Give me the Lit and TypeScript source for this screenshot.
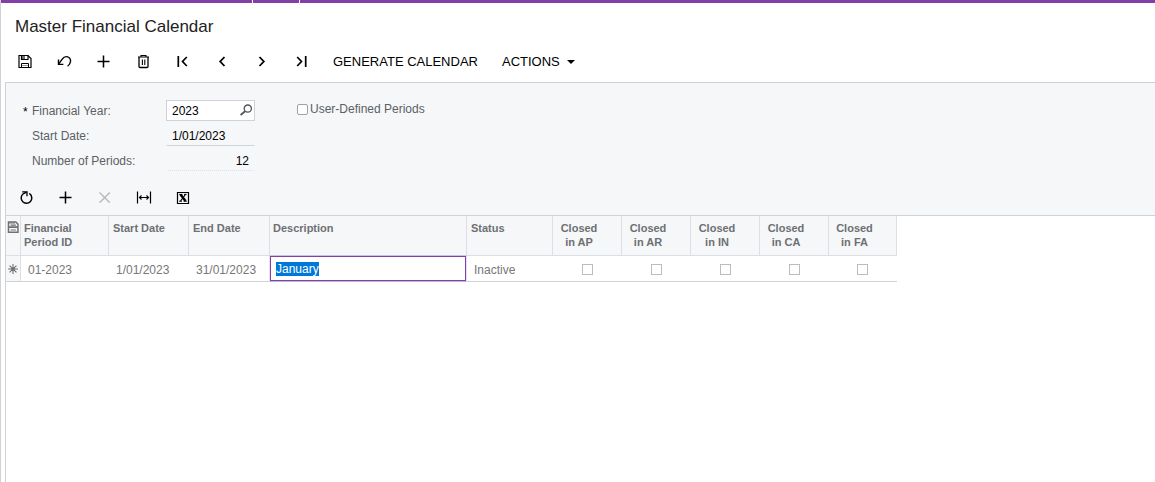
import { LitElement, html, css, svg, type TemplateResult } from "lit";
import { customElement, property, query } from "lit/decorators.js";

const line = (d: string, width = 1.5) =>
  svg`<path d=${d} fill="none" stroke="currentColor" stroke-width=${width} />`;

const icons: Record<string, TemplateResult> = {
  save: svg`${line("M3 2.5H12L15 5.5V14.5H3Z", 1.2)}${line("M5.5 2.5V6.5H12V2.5", 1.2)}<path d="M6 2.5h3v3.5h-3z" fill="currentColor" opacity=".55"/>${line("M5.5 14V10.5H12.5V14", 1)}<path d="M6 12h6v1h-6z" fill="currentColor" opacity=".4"/>`,
  undo: svg`${line("M3 10.6L6.2 6.2Q8 3.4 10.8 3.6Q14.6 4.4 14.6 8Q14.4 11.2 11.6 13.2", 1.4)}${line("M2.5 6.6V11.4H7.4", 1.4)}`,
  add: svg`${line("M8.5 2.5V14.5M2.5 8.5H14.5", 1.5)}`,
  trash: svg`${line("M3 4H14M6 4V2.5H11V4", 1.1)}${line("M4 4V13.5Q4 14.5 5 14.5H12Q13 14.5 13 13.5V4", 1.3)}${line("M7.4 6.5V12M9.8 6.5V12", 1.1)}`,
  first: svg`${line("M4.3 3V14M12.8 4L8.5 8.5L12.8 13", 1.7)}`,
  previous: svg`${line("M10.5 4L6.2 8.5L10.5 13", 1.8)}`,
  next: svg`${line("M6.5 4L10.8 8.5L6.5 13", 1.8)}`,
  last: svg`${line("M12.7 3V14M4.2 4L8.5 8.5L4.2 13", 1.7)}`,
  refresh: svg`${line("M8.6 3.6C5.6 4 3.2 6.2 3.2 9A5.2 5.2 0 0 0 8.5 14.2A5.2 5.2 0 0 0 13.8 9C13.8 7 13 5.5 11.3 4.4", 1.5)}${line("M4.2 2.8H9V7.2", 1.3)}`,
  remove: svg`${line("M3.5 3.5L13.8 13.8M13.8 3.5L3.5 13.8", 1.4)}`,
  fit: svg`${line("M2.5 2.5V14.5M15.5 2.5V14.5", 1.2)}${line("M4.5 8.5H13.5M6.5 6.5L4.5 8.5L6.5 10.5M11.5 6.5L13.5 8.5L11.5 10.5", 1.1)}`,
  excel: svg`${line("M3.5 3.5H14.5V14.5H3.5Z", 1.2)}${line("M6.5 5.5L11.5 12", 2.4)}${line("M11.5 5.5L6.5 12", 1.2)}${line("M5.2 5.4H8.4M10 5.4H12.6M5.2 12.2H8M9.6 12.2H12.8", 1)}`,
  search: svg`<circle cx="10.8" cy="6.6" r="3.6" fill="none" stroke="currentColor" stroke-width="1.3"/>${line("M8.1 9.3L3.6 13", 1.8)}`,
  notes: svg`${line("M3 2.5H12L14.5 5V15H3Z", 1.8)}<path d="M3 7.6h11.5v2.2H3zM3 3h8v1.4H3z" fill="currentColor"/>${line("M5.5 6.2H12M5.5 12.2H12", 1.3)}`,
  star: svg`${line("M8.5 2.5V14.5M2.5 8.5H14.5M4.3 4.3L12.7 12.7M12.7 4.3L4.3 12.7", 1.3)}<circle cx="8.5" cy="8.5" r="2" fill="currentColor"/>`,
};

@customElement("erp-icon")
class ErpIcon extends LitElement {
  static styles = css`
    :host { display: block; width: 17px; height: 17px; }
    svg { display: block; width: 100%; height: 100%; }
  `;
  @property() name = "";
  render() {
    return html`<svg viewBox="0 0 17 17" aria-hidden="true">${icons[this.name]}</svg>`;
  }
}

interface Tool { icon: string; label: string; disabled?: boolean; }

const pageTools: Tool[] = [
  { icon: "save", label: "Save" },
  { icon: "undo", label: "Cancel" },
  { icon: "add", label: "Add" },
  { icon: "trash", label: "Delete" },
  { icon: "first", label: "First" },
  { icon: "previous", label: "Previous" },
  { icon: "next", label: "Next" },
  { icon: "last", label: "Last" },
];

const gridTools: Tool[] = [
  { icon: "refresh", label: "Refresh" },
  { icon: "add", label: "Add row" },
  { icon: "remove", label: "Delete row", disabled: true },
  { icon: "fit", label: "Fit to screen" },
  { icon: "excel", label: "Export to Excel" },
];

const modules = ["AP", "AR", "IN", "CA", "FA"];

@customElement("app-root")
class AppRoot extends LitElement {
  static styles = css`
    :host {
      display: flex;
      flex-direction: column;
      min-height: 100vh;
      box-sizing: border-box;
      border-left: 1px solid #cfd2d6;
      background: #fff;
      color: #000;
      font: 12px/16px "Liberation Sans", Arial, sans-serif;
    }
    * { box-sizing: border-box; }
    button, input { font: inherit; color: inherit; margin: 0; }
    .strip { display: flex; gap: 1px; height: 3px; }
    .strip span { background: #823fa8; }
    .strip .wide { width: 251px; }
    .strip .narrow { width: 46px; }
    .strip .rest { flex: 1; }
    h1 { margin: 0; padding: 14px 14px 4px; font-size: 17px; line-height: 20px; font-weight: 400; color: #222; }
    .toolbar { display: flex; align-items: center; height: 41px; padding-left: 4px; }
    .tools { display: grid; grid-auto-flow: column; grid-auto-columns: 1fr; }
    .page-tools { width: 316px; }
    .grid-tools { width: 196px; height: 35px; padding-left: 1px; align-items: center; }
    button { border: 0; padding: 0; background: none; }
    .tool { display: flex; justify-content: center; align-items: center; height: 25px; }
    .tool:disabled { color: #b7b9bc; }
    .command { display: flex; align-items: center; gap: 7px; margin-left: 12px; font-size: 13px; line-height: 16px; }
    .command + .command { margin-left: 24px; }
    .caret { border: 4px solid transparent; border-top-color: #000; border-bottom: 0; }
    .content { flex: 1; margin-left: 4px; border-left: 1px solid #cfd2d6; border-top: 1px solid #cfd2d6; }
    .panel { background: #f5f7f9; border-bottom: 1px solid #cfd2d6; }
    .form { display: flex; gap: 42px; align-items: flex-start; padding: 17px 16px 9px; }
    .fields { display: grid; grid-template-columns: 144px 89px; row-gap: 4px; align-items: center; color: #5c5f63; }
    .fields label { display: flex; padding-left: 10px; }
    .fields label.required { padding-left: 1px; }
    .required::before { content: "*"; width: 9px; height: 16px; color: #000; line-height: 18px; }
    .field { display: flex; align-items: center; height: 21px; border: 1px solid transparent; color: #000; }
    .field input { width: 100%; min-width: 0; height: 16px; border: 0; padding: 0 5px; background: none; outline: none; }
    .lookup { border-color: #cfd2d6; background: #fff; }
    .lookup button { color: #555; }
    .underlined { border-bottom-color: #cfd2d6; }
    .dotted { border-bottom: 1px dotted #dfe1e4; }
    .dotted input { text-align: right; }
    .check { display: flex; align-items: center; gap: 2px; padding-top: 1px; color: #5c5f63; }
    input[type="checkbox"] { appearance: none; display: block; width: 11px; height: 11px; border: 1px solid #9fa1a8; border-radius: 2px; background: #fff; }
    table { width: 891px; table-layout: fixed; border-collapse: separate; border-spacing: 0; color: #777; }
    .c-icon { width: 15px; }
    .c-id { width: 88px; }
    .c-start { width: 80px; }
    .c-end { width: 81px; }
    .c-desc { width: 197px; }
    .c-status { width: 86px; }
    .c-module { width: 69px; }
    .c-module:last-child { width: 68px; }
    th { height: 40px; padding: 5px 4px 0; vertical-align: top; text-align: left; font-size: 11px; line-height: 14px; color: #6e7073; background: #f5f7f9; border-right: 1px solid #dcdfe5; border-bottom: 1px solid #dcdfe5; }
    th.close { padding-left: 3px; }
    th.module { padding: 5px 16px 0 0; text-align: center; }
    td { height: 26px; padding: 2px 0 0 7px; border-bottom: 1px solid #cfd2d6; }
    th.mark, td.mark { padding: 0; color: #6e7073; }
    th.mark erp-icon { width: 14px; height: 14px; margin-top: 4px; }
    td.mark { background: #f5f7f9; border-right: 1px solid #dcdfe5; }
    td.mark erp-icon { width: 14px; height: 14px; }
    td.tick { padding: 1px 1px 0 0; }
    td.tick input { margin: 0 auto; border-color: #bcbcbc; border-radius: 0; }
    td.edit { padding: 0 1px 0 0; }
    .editor { display: block; width: 100%; height: 25px; border: 1px solid #823fa8; padding: 0 5px; outline: none; box-shadow: 0 0 1px #823fa8; color: #555; background: #fff; }
    .editor::selection { background: #0078d7; color: #fff; }
  `;

  @query(".editor") editor!: HTMLInputElement;

  firstUpdated() {
    this.editor.focus();
    this.editor.select();
  }

  private tools(list: Tool[]) {
    return list.map((t) => html`
      <button class="tool" type="button" aria-label=${t.label} ?disabled=${t.disabled}>
        <erp-icon name=${t.icon}></erp-icon>
      </button>`);
  }

  render() {
    return html`
      <div class="strip"><span class="wide"></span><span class="narrow"></span><span class="rest"></span></div>
      <h1>Master Financial Calendar</h1>
      <div class="toolbar">
        <div class="tools page-tools">${this.tools(pageTools)}</div>
        <button class="command" type="button">GENERATE CALENDAR</button>
        <button class="command" type="button">ACTIONS<span class="caret"></span></button>
      </div>
      <main class="content">
        <section class="panel">
          <div class="form">
            <div class="fields">
              <label class="required" for="year">Financial Year:</label>
              <div class="field lookup">
                <input id="year" value="2023" />
                <button type="button" aria-label="Look up year"><erp-icon name="search"></erp-icon></button>
              </div>
              <label for="start">Start Date:</label>
              <div class="field underlined"><input id="start" value="1/01/2023" readonly /></div>
              <label for="periods">Number of Periods:</label>
              <div class="field dotted"><input id="periods" value="12" readonly /></div>
            </div>
            <label class="check"><input type="checkbox" />User-Defined Periods</label>
          </div>
          <div class="tools grid-tools">${this.tools(gridTools)}</div>
        </section>
        <table>
          <colgroup>
            <col class="c-icon" /><col class="c-id" /><col class="c-start" /><col class="c-end" />
            <col class="c-desc" /><col class="c-status" />
            ${modules.map(() => html`<col class="c-module" />`)}
          </colgroup>
          <thead>
            <tr>
              <th class="mark"><erp-icon name="notes"></erp-icon></th>
              <th class="close">Financial Period ID</th>
              <th>Start Date</th>
              <th>End Date</th>
              <th class="close">Description</th>
              <th>Status</th>
              ${modules.map((m) => html`<th class="module">Closed<br />in ${m}</th>`)}
            </tr>
          </thead>
          <tbody>
            <tr>
              <td class="mark"><erp-icon name="star"></erp-icon></td>
              <td>01-2023</td>
              <td>1/01/2023</td>
              <td>31/01/2023</td>
              <td class="edit"><input class="editor" aria-label="Description" value="January" /></td>
              <td>Inactive</td>
              ${modules.map((m) => html`<td class="tick"><input type="checkbox" aria-label="Closed in ${m}" /></td>`)}
            </tr>
          </tbody>
        </table>
      </main>
    `;
  }
}
